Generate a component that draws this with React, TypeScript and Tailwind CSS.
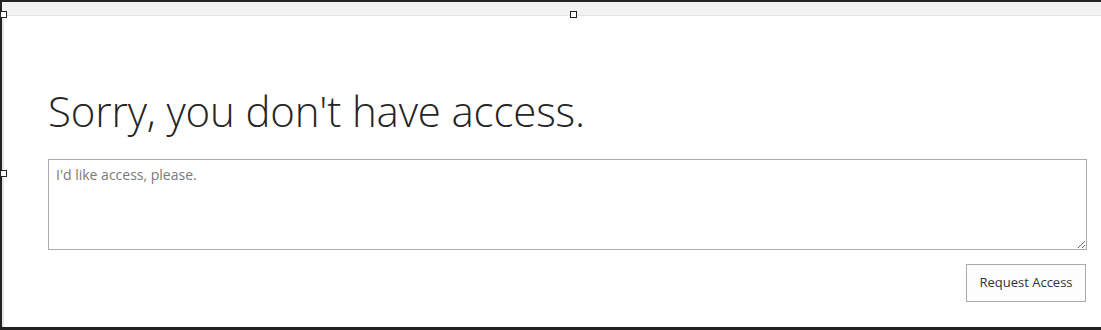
export default function App() {
  return (
    <div className="relative h-[330px] w-[1101px] overflow-hidden bg-[#222222] pt-[2px] pb-[3px] pl-[2px] font-['Open_Sans','Liberation_Sans',sans-serif]">
      <div className="flex h-full flex-col bg-white">
        <div className="h-[14px] border-b border-[#e4e4e4] bg-[#f2f2f2]" />
        <div className="flex flex-1 border-l-2 border-[#e6e6e6]">
          <div className="flex flex-1 flex-col pl-[44px] pr-[14px]">
            <h1 className="mt-[69px] text-[42px] leading-[52px] font-light tracking-[-0.15px] text-[#262626]">
              Sorry, you don't have access.
            </h1>
            <textarea
              className="mt-[22px] block h-[91px] w-full border border-[#ababab] px-[7px] py-[5px] text-[14px] leading-[20px] text-[#333] placeholder:text-[#7a7a7a] outline-none"
              placeholder="I'd like access, please."
            />
            <div className="mt-[14px] flex justify-end pr-[1px]">
              <button className="h-[38px] w-[120px] border border-[#ababab] bg-[#fdfdfd] text-[13px] text-[#333]">
                Request Access
              </button>
            </div>
          </div>
        </div>
      </div>
      <span className="absolute left-0 top-[11px] h-[7px] w-[7px] border border-[#222] bg-white" />
      <span className="absolute left-[570px] top-[11px] h-[7px] w-[7px] border border-[#222] bg-white" />
      <span className="absolute left-0 top-[170px] h-[7px] w-[7px] border border-[#222] bg-white" />
    </div>
  );
}
